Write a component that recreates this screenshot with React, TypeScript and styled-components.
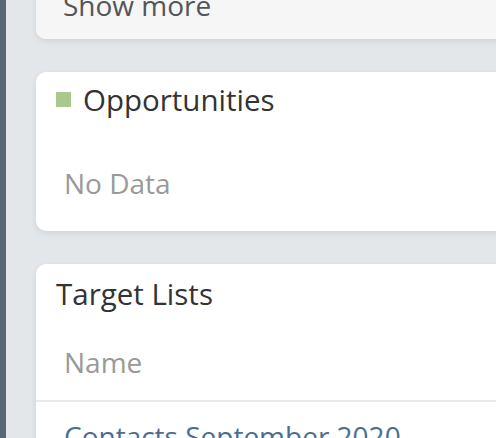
import React from "react";
import styled, { createGlobalStyle } from "styled-components";

const Global = createGlobalStyle`
  html, body { margin: 0; padding: 0; }
  body {
    background: #e4e7ea;
    font-family: "Open Sans", "Noto Sans", sans-serif;
    overflow: hidden;
    width: 496px;
    height: 438px;
  }
`;

const Page = styled.div`
  display: flex;
  height: 438px;
  overflow: hidden;
`;

const Sidebar = styled.div`
  width: 6px;
  flex: 0 0 6px;
  background: #566873;
`;

const Content = styled.main`
  flex: 1;
  display: flex;
  flex-direction: column;
  gap: 33px;
  padding-left: 30px;
  margin-top: -14px;
`;

const Card = styled.section`
  width: 540px;
  background: #ffffff;
  border-radius: 10px;
  box-shadow: 0 2px 6px rgba(0, 0, 0, 0.09);
  overflow: hidden;
  flex: 0 0 auto;
`;

const Footer = styled.div`
  background: #f6f6f6;
  padding: 0 27px 14px;
  font-size: 28px;
  line-height: 39px;
  color: #555555;
`;

const Header = styled.h2<{ $top: number }>`
  margin: 0;
  display: flex;
  align-items: center;
  gap: 12px;
  padding: ${(p) => p.$top}px 20px 0;
  font-size: 29.5px;
  line-height: 39px;
  font-weight: 400;
  color: #333333;
`;

const Swatch = styled.span<{ $color: string }>`
  width: 15px;
  height: 15px;
  flex: 0 0 15px;
  background: ${(p) => p.$color};
`;

const Empty = styled.div`
  padding: 45px 28px 28px;
  font-size: 28px;
  line-height: 39px;
  color: #999999;
`;

const Table = styled.table`
  width: 100%;
  border-collapse: collapse;
  margin-top: 30px;
  font-size: 28px;
  line-height: 39px;
`;

const Th = styled.th`
  text-align: left;
  font-weight: 400;
  color: #999999;
  padding: 0 28px 18px;
  border-bottom: 2px solid #e7eaea;
`;

const Td = styled.td`
  padding: 15px 28px;
`;

const Link = styled.a`
  color: #4b6e8f;
  text-decoration: none;
`;

export default function App() {
  return (
    <>
      <Global />
      <Page>
        <Sidebar />
        <Content>
          <Card>
            <Footer>Show more</Footer>
          </Card>
          <Card>
            <Header $top={8}>
              <Swatch $color="#a8c98b" />
              Opportunities
            </Header>
            <Empty>No Data</Empty>
          </Card>
          <Card>
            <Header $top={10}>Target Lists</Header>
            <Table>
              <thead>
                <tr>
                  <Th>Name</Th>
                </tr>
              </thead>
              <tbody>
                <tr>
                  <Td>
                    <Link href="#">Contacts September 2020</Link>
                  </Td>
                </tr>
              </tbody>
            </Table>
          </Card>
        </Content>
      </Page>
    </>
  );
}
